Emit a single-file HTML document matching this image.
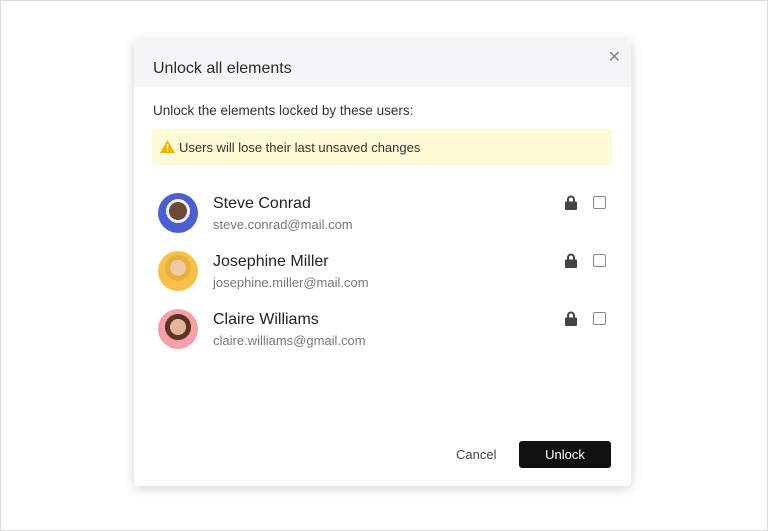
<!DOCTYPE html>
<html><head><style>
*{margin:0;padding:0;box-sizing:border-box}
body{width:768px;height:531px;background:#fff;font-family:"Liberation Sans",sans-serif;position:relative;overflow:hidden}
.bd{position:absolute;left:0;top:0;width:768px;height:531px;border:1px solid #dcdcdc}
.m{position:absolute;left:134px;top:40px;width:497px;height:446px;background:#fff;border-radius:4px;box-shadow:0 2px 12px rgba(0,0,0,.18);overflow:hidden}
.h{height:47px;background:#f4f5f7;padding:20px 0 0 19px;font-size:16px;color:#2a2a2a}
.x{position:absolute;right:10px;top:7px;font-size:16px;color:#888}
.sub{position:absolute;left:19px;top:63px;font-size:13.5px;color:#333}
.w{position:absolute;left:18px;top:89px;width:460px;height:36px;background:#fefcd6;border-radius:3px;font-size:13px;color:#333;padding:11px 0 0 27px}
.w svg{position:absolute;left:8px;top:11px}
.u{position:absolute;left:24px;width:440px}
.av{position:absolute;left:0;top:0;width:40px;height:40px;border-radius:50%}
.n{position:absolute;left:55px;top:2px;font-size:16px;color:#222}
.e{position:absolute;left:55px;top:24px;font-size:13px;color:#777;white-space:nowrap}
.lk{position:absolute;left:407px;top:2px}
.cb{position:absolute;left:435px;top:3px;width:13px;height:13px;border:1.5px solid #888;border-radius:2px}
.c{position:absolute;left:322px;top:407px;font-size:13px;color:#444}
.b{position:absolute;left:385px;top:401px;width:92px;height:27px;background:#111;border-radius:3px;color:#fff;font-size:13px;text-align:center;line-height:27px}
</style></head><body>
<div class="bd"></div>
<div class="m">
<div class="h">Unlock all elements</div>
<div class="x">✕</div>
<div class="sub">Unlock the elements locked by these users:</div>
<div class="w"><svg width="15" height="13" viewBox="0 0 15 13"><path d="M7.5 0L15 13H0Z" fill="#f0b400"/><rect x="6.8" y="4" width="1.4" height="5" fill="#fff"/><rect x="6.8" y="10" width="1.4" height="1.4" fill="#fff"/></svg>Users will lose their last unsaved changes</div>
<div class="u" style="top:153px"><div class="av" style="background:radial-gradient(circle at 50% 45%,#6b4a3a 0 9px,#eef0f5 9px 12px,#4a5fd0 12px)"></div><div class="n">Steve Conrad</div><div class="e">steve.conrad@mail.com</div>
<svg class="lk" width="12" height="15" viewBox="0 0 12 15"><path d="M3 7V4.5a3 3 0 0 1 6 0V7" stroke="#444" stroke-width="2" fill="none"/><rect x="0" y="6.5" width="12" height="8.5" rx="1" fill="#444"/></svg><div class="cb"></div></div>
<div class="u" style="top:211px"><div class="av" style="background:radial-gradient(circle at 50% 42%,#f1c9a8 0 8px,#e8b13a 8px 13px,#f7c04a 13px)"></div><div class="n">Josephine Miller</div><div class="e">josephine.miller@mail.com</div>
<svg class="lk" width="12" height="15" viewBox="0 0 12 15"><path d="M3 7V4.5a3 3 0 0 1 6 0V7" stroke="#444" stroke-width="2" fill="none"/><rect x="0" y="6.5" width="12" height="8.5" rx="1" fill="#444"/></svg><div class="cb"></div></div>
<div class="u" style="top:269px"><div class="av" style="background:radial-gradient(circle at 50% 45%,#e5b59a 0 8px,#5a3424 8px 13px,#f6a0a8 13px)"></div><div class="n">Claire Williams</div><div class="e">claire.williams@gmail.com</div>
<svg class="lk" width="12" height="15" viewBox="0 0 12 15"><path d="M3 7V4.5a3 3 0 0 1 6 0V7" stroke="#444" stroke-width="2" fill="none"/><rect x="0" y="6.5" width="12" height="8.5" rx="1" fill="#444"/></svg><div class="cb"></div></div>
<div class="c">Cancel</div>
<div class="b">Unlock</div>
</div>
</body></html>
